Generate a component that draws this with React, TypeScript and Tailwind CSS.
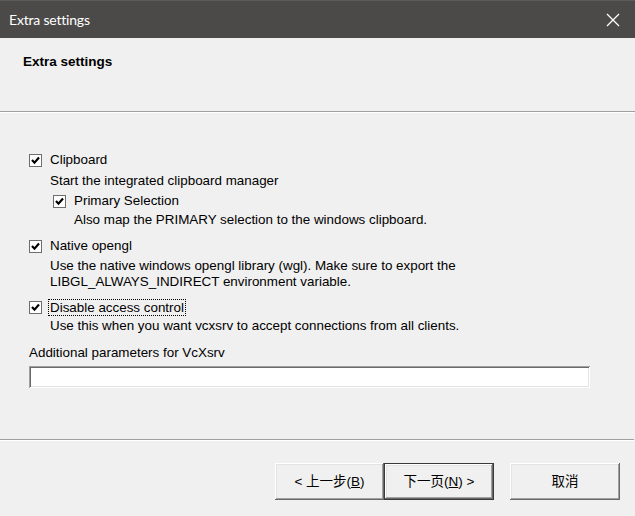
import React from "react";

const FONT = "font-['Liberation_Sans','Noto_Sans_CJK_SC',sans-serif]";

function Check({ checked = true }: { checked?: boolean }) {
  return (
    <svg width="13" height="13" viewBox="0 0 13 13" className="shrink-0">
      <rect x="0.5" y="0.5" width="12" height="12" fill="#ffffff" stroke="#6e6e6e" />
      {checked && (
        <polyline points="3,6 5.5,8.7 10,3.6" fill="none" stroke="#000000" strokeWidth="2.2" />
      )}
    </svg>
  );
}

function CheckRow({ label, focused = false }: { label: string; focused?: boolean }) {
  return (
    <div className="flex items-center h-4">
      <Check />
      <span
        className={
          focused
            ? "ml-[7px] px-[1px] leading-[15px] outline outline-1 outline-dotted outline-black"
            : "ml-[8px] leading-4"
        }
      >
        {label}
      </span>
    </div>
  );
}

const raised =
  "shadow-[inset_-1px_-1px_#696969,inset_1px_1px_#ffffff,inset_-2px_-2px_#a0a0a0,inset_2px_2px_#e3e3e3]";

export default function App() {
  return (
    <div className={`w-[635px] h-[516px] bg-[#f0f0f0] flex flex-col text-[13.4px] text-black ${FONT}`}>
      {/* title bar */}
      <div className="h-[38px] bg-[#4b4a48] border-t border-[#5c5b59] flex items-center justify-between pl-[9px] pr-[15px]">
        <span className="text-white text-[14px] tracking-[-0.2px] font-['Lato',sans-serif]">Extra settings</span>
        <svg width="14" height="14" viewBox="0 0 14 14">
          <path d="M1 1 L13 13 M13 1 L1 13" stroke="#ffffff" strokeWidth="1.3" />
        </svg>
      </div>

      {/* header */}
      <div className="h-[73px] pl-[23px] pt-[16px]">
        <div className="font-bold text-[13.5px] leading-4">Extra settings</div>
      </div>
      <div className="border-t border-[#a0a0a0] border-b border-b-white" />

      {/* body */}
      <div className="flex-1 pl-[29px] pr-[40px] pt-[39px]">
        <CheckRow label="Clipboard" />
        <div className="mt-[5px] ml-[21px] leading-4">Start the integrated clipboard manager</div>
        <div className="mt-[4px] ml-[24px]">
          <CheckRow label="Primary Selection" />
          <div className="mt-[3px] ml-[21px] leading-4">
            Also map the PRIMARY selection to the windows clipboard.
          </div>
        </div>

        <div className="mt-[10px]">
          <CheckRow label="Native opengl" />
        </div>
        <div className="mt-[4px] ml-[21px] leading-4">
          Use the native windows opengl library (wgl). Make sure to export the
          <br />
          LIBGL_ALWAYS_INDIRECT environment variable.
        </div>

        <div className="mt-[9px]">
          <CheckRow label="Disable access control" focused />
        </div>
        <div className="mt-[3px] ml-[21px] leading-4">
          Use this when you want vcxsrv to accept connections from all clients.
        </div>

        <div className="mt-[11px] leading-4">Additional parameters for VcXsrv</div>
        <div className="mt-[5px] mr-[5px] h-[22px] bg-white shadow-[inset_1px_1px_#a0a0a0,inset_-1px_-1px_#ffffff,inset_2px_2px_#696969,inset_-2px_-2px_#e3e3e3]" />
      </div>

      {/* footer */}
      <div className="h-[77px] flex flex-col">
        <div className="border-t border-[#a0a0a0] border-b border-b-white mr-[1px]" />
        <div className="flex justify-end pt-[22px] pr-[15px] leading-4 text-[13.5px]">
          <button className={`w-[109px] h-[37px] bg-[#f0f0f0] ${raised}`}>
            &lt; 上一步(<span className="underline">B</span>)
          </button>
          <button className="w-[110px] h-[37px] bg-[#f0f0f0] border border-[#3a3a3a] shadow-[inset_-1px_-1px_#696969,inset_1px_1px_#ffffff,inset_-2px_-2px_#a0a0a0,inset_2px_2px_#e3e3e3]">
            下一页(<span className="underline">N</span>) &gt;
          </button>
          <button className={`ml-[16px] w-[110px] h-[37px] bg-[#f0f0f0] ${raised}`}>取消</button>
        </div>
      </div>
    </div>
  );
}
